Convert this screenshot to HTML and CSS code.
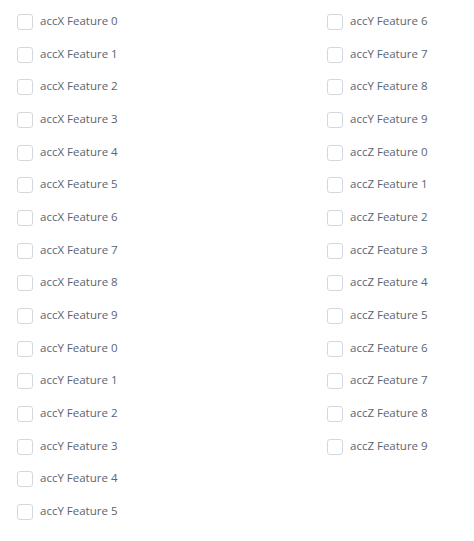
FILE: index.html
```html
<!DOCTYPE html>
<html lang="en">
<head>
    <meta charset="UTF-8">
    <meta name="viewport" content="width=device-width, initial-scale=1.0">
    <title>features</title>
    <link rel="stylesheet" href="styles.css">
</head>
<body>
    <div class="feature-list">
        <div class="column">
            <label class="feature"><input type="checkbox"><span>accX Feature 0</span></label>
            <label class="feature"><input type="checkbox"><span>accX Feature 1</span></label>
            <label class="feature"><input type="checkbox"><span>accX Feature 2</span></label>
            <label class="feature"><input type="checkbox"><span>accX Feature 3</span></label>
            <label class="feature"><input type="checkbox"><span>accX Feature 4</span></label>
            <label class="feature"><input type="checkbox"><span>accX Feature 5</span></label>
            <label class="feature"><input type="checkbox"><span>accX Feature 6</span></label>
            <label class="feature"><input type="checkbox"><span>accX Feature 7</span></label>
            <label class="feature"><input type="checkbox"><span>accX Feature 8</span></label>
            <label class="feature"><input type="checkbox"><span>accX Feature 9</span></label>
            <label class="feature"><input type="checkbox"><span>accY Feature 0</span></label>
            <label class="feature"><input type="checkbox"><span>accY Feature 1</span></label>
            <label class="feature"><input type="checkbox"><span>accY Feature 2</span></label>
            <label class="feature"><input type="checkbox"><span>accY Feature 3</span></label>
            <label class="feature"><input type="checkbox"><span>accY Feature 4</span></label>
            <label class="feature"><input type="checkbox"><span>accY Feature 5</span></label>
        </div>
        <div class="column">
            <label class="feature"><input type="checkbox"><span>accY Feature 6</span></label>
            <label class="feature"><input type="checkbox"><span>accY Feature 7</span></label>
            <label class="feature"><input type="checkbox"><span>accY Feature 8</span></label>
            <label class="feature"><input type="checkbox"><span>accY Feature 9</span></label>
            <label class="feature"><input type="checkbox"><span>accZ Feature 0</span></label>
            <label class="feature"><input type="checkbox"><span>accZ Feature 1</span></label>
            <label class="feature"><input type="checkbox"><span>accZ Feature 2</span></label>
            <label class="feature"><input type="checkbox"><span>accZ Feature 3</span></label>
            <label class="feature"><input type="checkbox"><span>accZ Feature 4</span></label>
            <label class="feature"><input type="checkbox"><span>accZ Feature 5</span></label>
            <label class="feature"><input type="checkbox"><span>accZ Feature 6</span></label>
            <label class="feature"><input type="checkbox"><span>accZ Feature 7</span></label>
            <label class="feature"><input type="checkbox"><span>accZ Feature 8</span></label>
            <label class="feature"><input type="checkbox"><span>accZ Feature 9</span></label>
        </div>
    </div>
</body>
</html>
```

FILE: styles.css
```css
*{
    padding: 0;
    margin: 0;
    box-sizing: border-box;
}
body{
    background: #fff;
    font-family: "Open Sans", sans-serif;
    font-size: 11.5px;
    color: #5b6472;
}
.feature-list{
    display: flex;
    padding: 14px 0 0 17px;
}
.column{
    display: flex;
    flex-direction: column;
    flex: 0 0 310px;
}
.column + .column{
    flex: 1;
}
.feature{
    display: flex;
    align-items: flex-start;
    height: 32.67px;
    cursor: pointer;
}
.feature input{
    appearance: none;
    width: 16px;
    height: 16px;
    border: 1px solid #d4d7dc;
    border-radius: 3px;
    background: #fff;
    margin-right: 7px;
    flex-shrink: 0;
}
.feature span{
    line-height: 14px;
}
```
